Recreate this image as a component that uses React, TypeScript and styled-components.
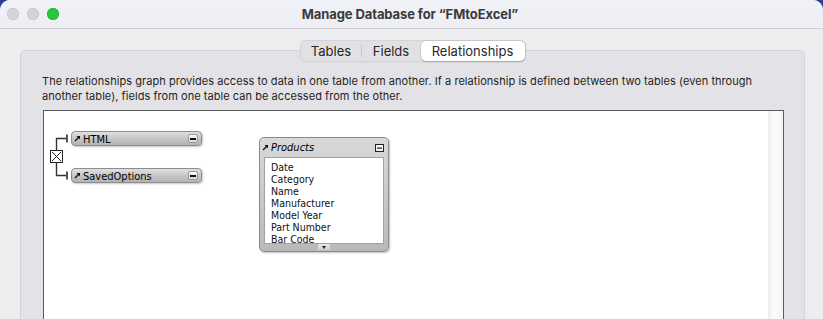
import React from "react";
import styled, { createGlobalStyle } from "styled-components";

const GlobalStyle = createGlobalStyle`
  html, body { margin: 0; padding: 0; background: #2f3e92; }
  #root { width: 823px; height: 319px; }
  * { box-sizing: border-box; }
`;

const Window = styled.div`
  width: 823px;
  height: 319px;
  display: flex;
  flex-direction: column;
  overflow: hidden;
  border-radius: 10px 10px 0 0;
  background: #ededf0;
  font-family: Inter, "Liberation Sans", sans-serif;
  color: #1d1d1f;
`;

const TitleBar = styled.div`
  height: 29px;
  flex: none;
  display: grid;
  grid-template-columns: 1fr auto 1fr;
  align-items: center;
  padding: 0 7px;
  background: linear-gradient(#f1f2f7, #eceef4);
  border-bottom: 1px solid #cfcfd3;
`;

const Lights = styled.div`
  display: flex;
  gap: 8px;
  padding-bottom: 1px;
`;

const Light = styled.span<{ $color: string; $edge: string }>`
  width: 12px;
  height: 12px;
  border-radius: 50%;
  background: ${(p) => p.$color};
  box-shadow: inset 0 0 0 0.5px ${(p) => p.$edge};
`;

const Title = styled.div`
  font-size: 13px;
  font-weight: 700;
  color: #3a3a3c;
  letter-spacing: -0.1px;
  padding-bottom: 1px;
  margin-left: -3px;
`;

const Body = styled.div`
  flex: 1;
  display: flex;
  flex-direction: column;
  padding: 11px 18px 0 20px;
`;

const TabBar = styled.div`
  position: relative;
  z-index: 1;
  display: flex;
  justify-content: center;
  margin-bottom: -12px;
`;

const Segmented = styled.div`
  display: flex;
  align-items: center;
  height: 22px;
  padding: 0 1px;
  border-radius: 6px;
  background: #e1e1e4;
  box-shadow: inset 0 0 0 0.5px #c9c9cd, 0 0.5px 0 rgba(0, 0, 0, 0.05);
`;

const Segment = styled.div<{ $w: number; $active?: boolean; $sep?: boolean }>`
  position: relative;
  width: ${(p) => p.$w}px;
  height: ${(p) => (p.$active ? 20 : 22)}px;
  display: flex;
  align-items: center;
  justify-content: center;
  font-size: 13px;
  color: #262628;
  border-radius: 5px;
  background: ${(p) => (p.$active ? "#ffffff" : "transparent")};
  box-shadow: ${(p) =>
    p.$active ? "0 0 0 0.5px rgba(0,0,0,0.12), 0 1px 1.5px rgba(0,0,0,0.18)" : "none"};
  &::after {
    content: "";
    display: ${(p) => (p.$sep ? "block" : "none")};
    position: absolute;
    right: 0;
    top: 5px;
    width: 1px;
    height: 12px;
    background: #c6c6ca;
  }
`;

const Panel = styled.div`
  flex: 1;
  display: flex;
  flex-direction: column;
  background: #e3e3e7;
  border: 1px solid #d4d4d8;
  border-bottom: none;
  border-radius: 6px 6px 0 0;
  padding: 23px 20px 0 21px;
`;

const Description = styled.p`
  margin: 0;
  font-size: 11px;
  line-height: 15px;
  color: #1f1f21;
  letter-spacing: 0.05px;
`;

const GraphBox = styled.div`
  position: relative;
  flex: 1;
  margin: 6px 0 0 1px;
  display: flex;
  justify-content: flex-end;
  background: #ffffff;
  border: 1px solid #5c5c5e;
  border-bottom: none;
  font-family: "DejaVu Sans Condensed", "DejaVu Sans", sans-serif;
`;

const ScrollStrip = styled.div`
  width: 15px;
  background: linear-gradient(to right, #f0f0f0, #fbfbfb 40%, #f3f3f3);
  border-left: 1px solid #ececec;
`;

const Connector = styled.svg`
  position: absolute;
  left: 5px;
  top: 21px;
`;

const Chip = styled.div<{ $x: number; $y: number }>`
  position: absolute;
  left: ${(p) => p.$x}px;
  top: ${(p) => p.$y}px;
  width: 131px;
  height: 15px;
  display: flex;
  align-items: center;
  gap: 2px;
  padding: 0 3px 0 2px;
  border: 1px solid #8d8d8f;
  border-radius: 4px;
  background: linear-gradient(#e0e0e0, #c4c4c4 55%, #b3b3b3);
  box-shadow: 1px 1px 2px rgba(0, 0, 0, 0.22);
`;

const ChipLabel = styled.span`
  font-size: 11px;
  line-height: 13px;
  padding-top: 1px;
  color: #000;
  flex: 1;
`;

const MinButton = styled.span`
  width: 10px;
  height: 9px;
  display: flex;
  align-items: center;
  justify-content: center;
  border: 1px solid #9a9a9c;
  border-radius: 2px;
  background: linear-gradient(#fafafa, #d8d8d8);
  &::before {
    content: "";
    width: 6px;
    height: 2px;
    background: #111;
  }
`;

const TableNode = styled.div<{ $x: number; $y: number }>`
  position: absolute;
  left: ${(p) => p.$x}px;
  top: ${(p) => p.$y}px;
  width: 130px;
  height: 115px;
  display: flex;
  flex-direction: column;
  border: 1px solid #8a8a8c;
  border-radius: 5px;
  background: linear-gradient(#d9d9d9, #c6c6c6 60%, #b9b9b9);
  box-shadow: 1px 1px 2px rgba(0, 0, 0, 0.25);
`;

const NodeHeader = styled.div`
  height: 19px;
  display: flex;
  align-items: center;
  gap: 2px;
  padding: 0 3px 0 2px;
`;

const NodeTitle = styled.span`
  flex: 1;
  font-size: 11px;
  font-style: italic;
  color: #000;
`;

const FieldList = styled.div`
  height: 87px;
  margin: 0 4px;
  padding: 3px 0 0 6px;
  overflow: hidden;
  background: #ffffff;
  border: 1px solid #a2a2a4;
`;

const Field = styled.div`
  font-size: 10.5px;
  line-height: 12px;
  color: #111;
  white-space: nowrap;
`;

const NodeFooter = styled.div`
  flex: 1;
  display: flex;
  justify-content: center;
  align-items: flex-start;
`;

const FooterTab = styled.div`
  width: 12px;
  height: 6px;
  display: flex;
  justify-content: center;
  align-items: center;
  background: linear-gradient(#e6e6e6, #cfcfcf);
  &::before {
    content: "";
    border-left: 2.5px solid transparent;
    border-right: 2.5px solid transparent;
    border-top: 3px solid #222;
  }
`;

const LinkArrow = () => (
  <svg width="7" height="7" viewBox="0 0 7 7">
    <path d="M1 6 L5 2" stroke="#111" strokeWidth="1.2" />
    <path d="M2.5 1 H6 V4.5 Z" fill="#111" />
  </svg>
);

const CollapseIcon = () => (
  <svg width="9" height="8" viewBox="0 0 9 8" style={{ marginRight: 1 }}>
    <rect x="0.5" y="0.5" width="8" height="7" fill="#f4f4f4" stroke="#222" />
    <rect x="2" y="3.5" width="5" height="1.2" fill="#222" />
  </svg>
);

const fields = ["Date", "Category", "Name", "Manufacturer", "Model Year", "Part Number", "Bar Code"];

export default function App() {
  return (
    <>
      <GlobalStyle />
      <Window>
        <TitleBar>
          <Lights>
            <Light $color="#d3d3d8" $edge="#bcbcc2" />
            <Light $color="#d3d3d8" $edge="#bcbcc2" />
            <Light $color="#2ac642" $edge="#1fa533" />
          </Lights>
          <Title>Manage Database for “FMtoExcel”</Title>
          <div />
        </TitleBar>
        <Body>
          <TabBar>
            <Segmented>
              <Segment $w={61} $sep>Tables</Segment>
              <Segment $w={59}>Fields</Segment>
              <Segment $w={104} $active>Relationships</Segment>
            </Segmented>
          </TabBar>
          <Panel>
            <Description>
              The relationships graph provides access to data in one table from another. If a relationship is defined between two tables (even through
              <br />
              another table), fields from one table can be accessed from the other.
            </Description>
            <GraphBox>
              <Connector width="26" height="52" viewBox="0 0 26 52">
                <rect x="1.5" y="18.5" width="12" height="12" fill="#fff" stroke="#222" />
                <path d="M3 20 L12 29 M12 20 L3 29" stroke="#222" strokeWidth="1" />
                <path d="M7.5 18.5 V6.5 H17" stroke="#333" strokeWidth="1.4" fill="none" />
                <path d="M7.5 30.5 V43.5 H17" stroke="#333" strokeWidth="1.4" fill="none" />
                <path d="M18 2.5 V10.5 M18 39.5 V47.5" stroke="#555" strokeWidth="2" />
              </Connector>
              <Chip $x={27} $y={20}>
                <LinkArrow />
                <ChipLabel>HTML</ChipLabel>
                <MinButton />
              </Chip>
              <Chip $x={27} $y={57}>
                <LinkArrow />
                <ChipLabel>SavedOptions</ChipLabel>
                <MinButton />
              </Chip>
              <TableNode $x={215} $y={26}>
                <NodeHeader>
                  <LinkArrow />
                  <NodeTitle>Products</NodeTitle>
                  <CollapseIcon />
                </NodeHeader>
                <FieldList>
                  {fields.map((f) => (
                    <Field key={f}>{f}</Field>
                  ))}
                </FieldList>
                <NodeFooter>
                  <FooterTab />
                </NodeFooter>
              </TableNode>
              <ScrollStrip />
            </GraphBox>
          </Panel>
        </Body>
      </Window>
    </>
  );
}
